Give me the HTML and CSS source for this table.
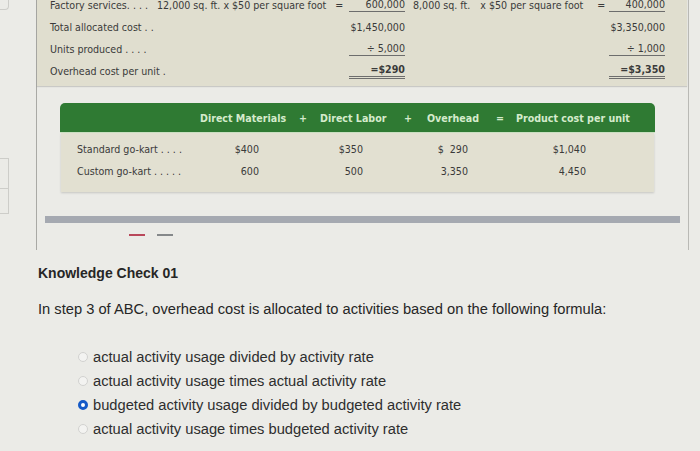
FILE: index.html
```html
<!DOCTYPE html>
<html>
<head>
<meta charset="utf-8">
<link rel="stylesheet" href="styles.css">
</head>
<body>
<div class="page">
  <div class="side">
    <div class="sbox sbox-top"></div>
    <div class="sbox sbox-a"></div>
    <div class="sbox sbox-b"></div>
  </div>
  <div class="frame">
    <div class="calc">
      <div class="calc-row">
        <span class="lbl">Factory services. . . .</span>
        <span class="f1">12,000 sq. ft. x $50 per square foot<span class="eq">=</span></span>
        <span class="val ul">600,000</span>
        <span class="f2"><span>8,000 sq. ft.</span><span class="x">x $50 per square foot</span><span class="eq2">=</span></span>
        <span class="val ul">400,000</span>
      </div>
      <div class="calc-row">
        <span class="lbl">Total allocated cost . .</span>
        <span class="f1"></span>
        <span class="val">$1,450,000</span>
        <span class="f2"></span>
        <span class="val">$3,350,000</span>
      </div>
      <div class="calc-row">
        <span class="lbl">Units produced . . . .</span>
        <span class="f1"></span>
        <span class="val ul">÷ 5,000</span>
        <span class="f2"></span>
        <span class="val ul">÷ 1,000</span>
      </div>
      <div class="calc-row">
        <span class="lbl">Overhead cost per unit .</span>
        <span class="f1"></span>
        <span class="val dul strong">=$290</span>
        <span class="f2"></span>
        <span class="val dul strong">=$3,350</span>
      </div>
    </div>

    <div class="costtable">
      <div class="ct-head">
        <span></span>
        <span class="h dm">Direct Materials</span>
        <span class="op">+</span>
        <span class="h dl">Direct Labor</span>
        <span class="op">+</span>
        <span class="h oh">Overhead</span>
        <span class="op">=</span>
        <span class="h pc">Product cost per unit</span>
      </div>
      <div class="ct-body">
        <div class="ct-row">
          <span class="rl">Standard go-kart . . . .</span>
          <span class="c dm">$400</span>
          <span></span>
          <span class="c dl">$350</span>
          <span></span>
          <span class="c oh">$&nbsp; 290</span>
          <span></span>
          <span class="c pc">$1,040</span>
        </div>
        <div class="ct-row">
          <span class="rl">Custom go-kart . . . . .</span>
          <span class="c dm">600</span>
          <span></span>
          <span class="c dl">500</span>
          <span></span>
          <span class="c oh">3,350</span>
          <span></span>
          <span class="c pc">4,450</span>
        </div>
      </div>
    </div>

    <div class="progress"></div>
    <div class="dashes"><span class="dash red"></span><span class="dash grey"></span></div>
  </div>
</div>

<section class="kc">
  <h2 class="kc-title">Knowledge Check 01</h2>
  <p class="kc-q">In step 3 of ABC, overhead cost is allocated to activities based on the following formula:</p>
  <ul class="opts">
    <li class="opt"><span class="radio"></span>actual activity usage divided by activity rate</li>
    <li class="opt"><span class="radio"></span>actual activity usage times actual activity rate</li>
    <li class="opt"><span class="radio on"></span>budgeted activity usage divided by budgeted activity rate</li>
    <li class="opt"><span class="radio"></span>actual activity usage times budgeted activity rate</li>
  </ul>
</section>
</body>
</html>
```

FILE: styles.css
```css
html, body {
  margin: 0;
  padding: 0;
}
body {
  width: 700px;
  height: 451px;
  overflow: hidden;
  background: #ebebe7;
  font-family: "DejaVu Sans Condensed", "DejaVu Sans", sans-serif;
  color: #3a3a3a;
}

.page {
  display: flex;
  height: 250px;
}
.side {
  width: 36px;
  display: flex;
  flex-direction: column;
}
.sbox {
  width: 8px;
  border: 1px solid #cdcdc9;
  border-left: none;
}
.sbox-top {
  height: 9px;
  border-top: none;
  border-radius: 0 0 4px 0;
}
.sbox-a {
  margin-top: 148px;
  height: 29px;
}
.sbox-b {
  height: 24px;
  border-top: none;
}

.frame {
  width: 651px;
  border-left: 1px solid #a9a9a5;
  border-right: 1px solid #b9b9b5;
  display: flex;
  flex-direction: column;
}

/* calculation panel */
.calc {
  margin: -6px 1px 0 0;
  padding: 0 0 4px 13px;
  background: #e0decf;
  box-shadow: 0 1px 1px rgba(0,0,0,0.14);
}
.calc-row {
  display: grid;
  grid-template-columns: 107px 192px 56px 204px 56px;
  height: 22px;
  align-items: center;
  font-size: 10.6px;
  white-space: nowrap;
}
.f1 {
  display: flex;
}
.eq {
  margin-left: 9px;
}
.f2 {
  display: flex;
  padding-left: 8px;
}
.f2 .x {
  margin-left: 10px;
}
.f2 .eq2 {
  margin-left: 14px;
}
.val {
  text-align: right;
  line-height: 13px;
}
.ul {
  border-bottom: 1px solid #6d6d6d;
}
.dul {
  border-bottom: 3px double #6d6d6d;
}
.strong {
  font-weight: bold;
}

/* cost table */
.costtable {
  margin: 17px 0 0 23px;
  width: 595px;
}
.ct-head,
.ct-row {
  display: grid;
  grid-template-columns: 135px 101px 14px 88px 20px 72px 20px 145px;
  align-items: center;
  font-size: 10.6px;
  white-space: nowrap;
}
.ct-head {
  height: 29px;
  background: #2f7a33;
  border-radius: 5px 5px 0 0;
  border-bottom: 1px solid #cde2c4;
  color: #d5ebcc;
  font-weight: bold;
}
.ct-head .op {
  text-align: center;
}
.h.dm { padding-left: 5px; }
.h.dl { padding-left: 10px; }
.h.oh { padding-left: 9px; }
.h.pc { padding-left: 6px; }

.ct-body {
  margin-left: 1px;
  margin-right: 1px;
  background: #e2e0d1;
  padding: 5px 0 10px;
  box-shadow: 0 1px 2px rgba(0,0,0,0.16);
}
.ct-row {
  height: 22px;
  margin-left: -1px;
}
.rl { padding-left: 17px; }
.c { text-align: right; }
.c.dm { padding-right: 37px; }
.c.dl { padding-right: 35px; }
.c.oh { padding-right: 22px; }
.c.pc { padding-right: 69px; }

.progress {
  margin: 24px 0 0 8px;
  width: 635px;
  height: 7px;
  background: #a5a9b1;
}
.dashes {
  display: flex;
  gap: 12px;
  margin: 11px 0 0 92px;
}
.dash {
  width: 16px;
  height: 2px;
}
.dash.red { background: #b9485b; }
.dash.grey { background: #85888a; }

/* knowledge check */
.kc {
  padding-left: 38px;
  font-family: "Liberation Sans", Arial, sans-serif;
  color: #262626;
}
.kc-title {
  margin: 13px 0 0;
  font-size: 14px;
  line-height: 20px;
  font-weight: bold;
}
.kc-q {
  margin: 16px 0 0;
  font-size: 14.7px;
  line-height: 20px;
}
.opts {
  list-style: none;
  margin: 26px 0 0;
  padding: 0 0 0 40px;
}
.opt {
  display: flex;
  align-items: center;
  height: 24px;
  font-size: 14.7px;
  gap: 5px;
  color: #2e2e2e;
}
.radio {
  width: 8px;
  height: 8px;
  border-radius: 50%;
  border: 1px solid #d2d2d0;
  background: #f3f3f1;
  flex: none;
}
.radio.on {
  width: 4px;
  height: 4px;
  border: 3px solid #1459c7;
  background: #ffffff;
}
```
